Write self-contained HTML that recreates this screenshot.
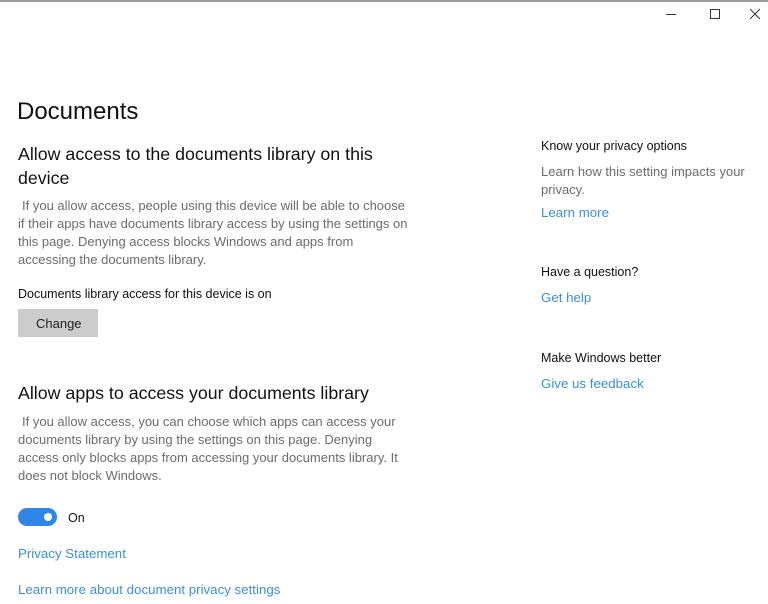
<!DOCTYPE html>
<html><head><meta charset="utf-8"><style>
*{margin:0;padding:0}
body{width:768px;height:604px;background:#fff;position:relative;overflow:hidden;font-family:"Liberation Sans",sans-serif;color:#000}
.t{position:absolute;white-space:nowrap;line-height:1}
.g{color:#6b6b6b;font-size:13px}
.b{color:#3a8fd9;font-size:13.3px}
.h{font-size:17.8px;color:#111}
.s{font-size:12.5px;color:#111}
</style></head><body>
<div style="position:absolute;left:0;top:0;width:768px;height:2px;background:#9a9a9a"></div>
<div style="position:absolute;left:666px;top:14px;width:10px;height:1px;background:#333"></div>
<div style="position:absolute;left:710px;top:9px;width:8px;height:8px;border:1px solid #333"></div>
<svg style="position:absolute;left:750px;top:9px" width="10" height="10"><path d="M0 0L10 10M10 0L0 10" stroke="#333" stroke-width="1"/></svg>

<div class="t" style="left:17px;top:100px;font-size:24px;color:#111">Documents</div>
<div class="t h" style="left:18px;top:146px">Allow access to the documents library on this</div>
<div class="t h" style="left:18px;top:170px">device</div>
<div class="t g" style="left:22px;top:199px">If you allow access, people using this device will be able to choose</div>
<div class="t g" style="left:18px;top:217px">if their apps have documents library access by using the settings on</div>
<div class="t g" style="left:18px;top:235px">this page. Denying access blocks Windows and apps from</div>
<div class="t g" style="left:18px;top:253px">accessing the documents library.</div>
<div class="t s" style="left:18px;top:288px">Documents library access for this device is on</div>
<div style="position:absolute;left:18px;top:309px;width:80px;height:28px;background:#cccccc"></div>
<div class="t" style="left:36px;top:317px;font-size:13px;color:#222">Change</div>

<div class="t h" style="left:18px;top:385px">Allow apps to access your documents library</div>
<div class="t g" style="left:22px;top:415px">If you allow access, you can choose which apps can access your</div>
<div class="t g" style="left:18px;top:433px">documents library by using the settings on this page. Denying</div>
<div class="t g" style="left:18px;top:451px">access only blocks apps from accessing your documents library. It</div>
<div class="t g" style="left:18px;top:469px">does not block Windows.</div>
<div style="position:absolute;left:18px;top:508px;width:39px;height:18px;border-radius:9px;background:#2f86e6"></div>
<div style="position:absolute;left:44px;top:513px;width:8px;height:8px;border-radius:50%;background:#fff"></div>
<div class="t s" style="left:68px;top:512px">On</div>
<div class="t b" style="left:18px;top:547px">Privacy Statement</div>
<div class="t b" style="left:18px;top:583px">Learn more about document privacy settings</div>

<div class="t s" style="left:541px;top:140px">Know your privacy options</div>
<div class="t g" style="left:541px;top:165px">Learn how this setting impacts your</div>
<div class="t g" style="left:541px;top:183px">privacy.</div>
<div class="t b" style="left:541px;top:206px">Learn more</div>
<div class="t s" style="left:541px;top:266px">Have a question?</div>
<div class="t b" style="left:541px;top:291px">Get help</div>
<div class="t s" style="left:541px;top:352px">Make Windows better</div>
<div class="t b" style="left:541px;top:377px">Give us feedback</div>
</body></html>
